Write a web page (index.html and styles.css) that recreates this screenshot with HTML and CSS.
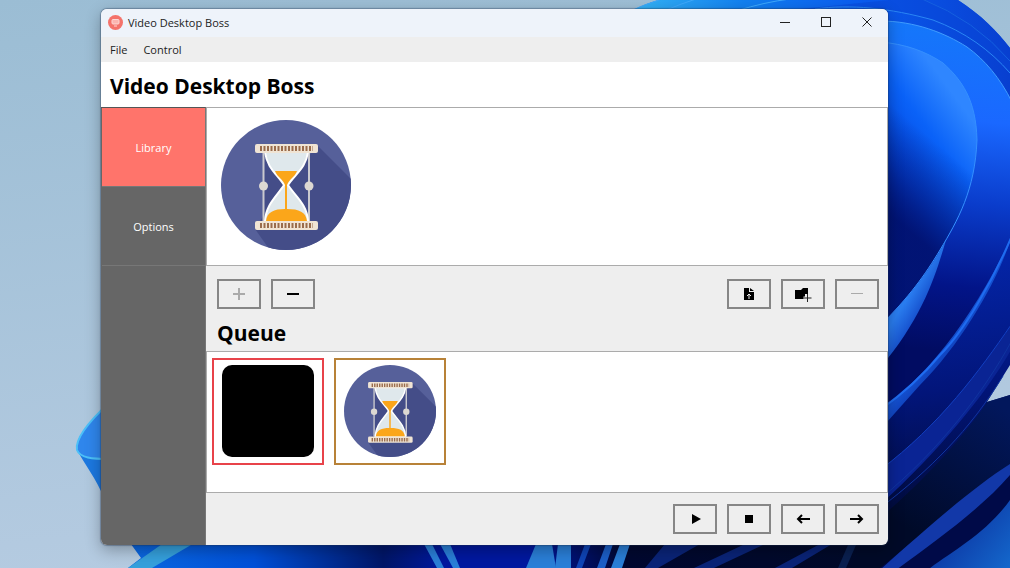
FILE: index.html
```html
<!DOCTYPE html>
<html lang="en">
<head>
    <meta charset="UTF-8">
    <meta name="viewport" content="width=device-width, initial-scale=1.0">
    <title>Video Desktop Boss</title>
    <link rel="stylesheet" href="styles.css">
</head>
<body>
    <!-- Desktop wallpaper -->
    <svg class="wallpaper" viewBox="0 0 1010 568" preserveAspectRatio="none" aria-hidden="true">
        <defs>
            <linearGradient id="sky" x1="0" y1="0" x2="0.2" y2="1">
                <stop offset="0" stop-color="#9bbdd4"/>
                <stop offset="1" stop-color="#b5cbe1"/>
            </linearGradient>
            <linearGradient id="bloom" gradientUnits="userSpaceOnUse" x1="900" y1="0" x2="960" y2="520">
                <stop offset="0" stop-color="#0a5cf0"/>
                <stop offset="0.25" stop-color="#0a4ae0"/>
                <stop offset="0.5" stop-color="#0425a8"/>
                <stop offset="0.75" stop-color="#02157a"/>
                <stop offset="1" stop-color="#010a35"/>
            </linearGradient>
            <linearGradient id="top" gradientUnits="userSpaceOnUse" x1="630" y1="0" x2="1010" y2="0">
                <stop offset="0" stop-color="#35b5f5"/>
                <stop offset="0.3" stop-color="#1280f0"/>
                <stop offset="0.6" stop-color="#0a5cf0"/>
                <stop offset="1" stop-color="#083fd0"/>
            </linearGradient>
            <linearGradient id="mid" gradientUnits="userSpaceOnUse" x1="960" y1="20" x2="930" y2="350">
                <stop offset="0" stop-color="#1478fa"/>
                <stop offset="0.3" stop-color="#1a68ff"/>
                <stop offset="0.55" stop-color="#0a3ccb"/>
                <stop offset="0.8" stop-color="#021488"/>
                <stop offset="1" stop-color="#010c62"/>
            </linearGradient>
            <linearGradient id="petal" gradientUnits="userSpaceOnUse" x1="965" y1="110" x2="870" y2="180">
                <stop offset="0" stop-color="#2f86ff"/>
                <stop offset="0.35" stop-color="#0a62f8"/>
                <stop offset="0.75" stop-color="#0448e0"/>
                <stop offset="1" stop-color="#0434c0"/>
            </linearGradient>
            <linearGradient id="petalShade" gradientUnits="userSpaceOnUse" x1="945" y1="150" x2="890" y2="215">
                <stop offset="0" stop-color="#01106c" stop-opacity="0"/>
                <stop offset="1" stop-color="#01106c" stop-opacity="0.9"/>
            </linearGradient>
            <linearGradient id="fold" gradientUnits="userSpaceOnUse" x1="900" y1="310" x2="925" y2="325">
                <stop offset="0" stop-color="#2a7df0"/>
                <stop offset="1" stop-color="#0a35b8"/>
            </linearGradient>
            <linearGradient id="band" gradientUnits="userSpaceOnUse" x1="930" y1="360" x2="960" y2="385">
                <stop offset="0" stop-color="#1450d0"/>
                <stop offset="1" stop-color="#031a88"/>
            </linearGradient>
            <linearGradient id="night" gradientUnits="userSpaceOnUse" x1="990" y1="400" x2="910" y2="530">
                <stop offset="0" stop-color="#02175c"/>
                <stop offset="1" stop-color="#000a28"/>
            </linearGradient>
            <linearGradient id="corner" gradientUnits="userSpaceOnUse" x1="940" y1="510" x2="1010" y2="568">
                <stop offset="0" stop-color="#0a2a9a"/>
                <stop offset="1" stop-color="#1468cc"/>
            </linearGradient>
            <linearGradient id="base" gradientUnits="userSpaceOnUse" x1="140" y1="0" x2="900" y2="0">
                <stop offset="0" stop-color="#0a66e0"/>
                <stop offset="0.15" stop-color="#0050d8"/>
                <stop offset="0.32" stop-color="#001668"/>
                <stop offset="0.4" stop-color="#0018a0"/>
                <stop offset="0.52" stop-color="#0018a0"/>
                <stop offset="0.64" stop-color="#000830"/>
                <stop offset="1" stop-color="#000a28"/>
            </linearGradient>
        </defs>
        <rect width="1010" height="568" fill="url(#sky)"/>

        <path d="M620 20 C640 6 650 2 660 0 H958 C980 14 998 32 1010 48 V365 L987 402 L1010 395 V568 H600 Z" fill="url(#bloom)"/>
        <path d="M625 14 C640 6 650 2 660 0 H958 C980 14 998 32 1010 48 V120 H880 L870 14 Z" fill="url(#top)"/>
        <path d="M815 9 C850 4 890 8 933 20 C965 32 990 50 1010 73 V61 Q975 20 922 -1 H900 L800 9 Z" fill="#0846d8" opacity="0.5"/>
        <g fill="none" stroke="#3fa8fa" stroke-width="1">
            <path d="M626 13 Q645 4 662 -1"/>
            <path d="M664 11 Q680 4 696 -1"/>
            <path d="M736 11 Q765 2 790 -1"/>
            <path d="M922 -1 Q975 20 1010 61" stroke="#1560e0"/>
            <path d="M815 9 C850 4 890 8 933 20 C965 32 990 50 1010 73" stroke="#2a86f5"/>
        </g>

        <path d="M880 21 C915 21 945 33 967 47 C985 60 1000 78 1012 102 V240 C993 280 965 330 940 355 Q915 385 880 410 Z" fill="url(#mid)"/>
        <path d="M880 21 C915 21 945 33 967 47 C985 60 1000 78 1012 102" fill="none" stroke="#3f9cff"/>
        <path d="M880 42 C905 44 925 51 943 63 C962 80 976 100 977 140 C975 190 958 220 940 250 C925 275 910 296 880 326 Z" fill="url(#petal)"/>
        <path d="M880 42 C905 44 925 51 943 63 C962 80 976 100 977 140 C975 190 958 220 940 250 C925 275 910 296 880 326 Z" fill="url(#petalShade)"/>
        <path d="M880 42 C905 44 925 51 943 63 C962 80 976 100 977 140 C975 190 958 220 940 250 C925 275 910 296 880 326" fill="none" stroke="#3590ff" stroke-width="1"/>
        <path d="M946 240 C937 270 925 315 880 368 V326 C910 296 930 270 946 240 Z" fill="url(#fold)"/>

        <!-- Lower folds -->
        <path d="M1011 238 C1000 275 965 340 920 385 Q902 405 880 430 V410 C915 385 965 335 1011 238 Z" fill="url(#band)"/>
        <path d="M1011 238 C993 280 965 330 940 355 Q915 385 880 410" fill="none" stroke="#1f6cf0" stroke-width="2"/>
        <path d="M1011 325 C980 370 940 425 880 470 V505 C940 450 985 395 1011 350 Z" fill="#0a2494"/>
        <path d="M1011 325 C980 370 940 425 880 470" fill="none" stroke="#123fc0"/>
        <path d="M1011 342 C985 390 940 450 880 499 M1003 376 C970 430 930 470 880 508" fill="none" stroke="#0f34a0"/>

        <!-- Left petal tip -->
        <path d="M110 402 C85 425 75 440 77 450 C85 465 96 478 104 498 H110 Z" fill="#1c78e0"/>
        <path d="M110 402 C85 425 75 440 77 450 C80 458 92 459 110 459 Z" fill="#2f86ec" stroke="#4cc0f8" stroke-width="2"/>

        <!-- Strip below the window -->
        <path d="M128 540 L141 558 L128 568 H900 V540 Z" fill="url(#base)"/>
        <path d="M165 542 L128 568 H152 L196 542 Z" fill="#35a0dc"/>
        <g fill="#2a7fd8">
            <path d="M424 544 L437 568 H444 L432 544 Z"/>
            <path d="M440 544 L453 568 H460 L450 544 Z"/>
            <path d="M536 544 L526 568 H556 L552 544 Z"/>
            <path d="M558 544 L555 568 H571 V544 Z"/>
            <path d="M585 544 L576 568 H582 L591 544 Z" fill="#0f45b8"/>
            <path d="M606 544 L597 568 H605 L613 544 Z" fill="#1c5fc8"/>
            <path d="M620 544 L611 568 H622 L630 544 Z"/>
        </g>
        <g fill="#0a2478">
            <path d="M665 544 L645 568 H658 L700 544 Z"/>
            <path d="M745 544 L694 568 H714 L765 544 Z"/>
            <path d="M820 544 L775 568 H792 L832 544 Z"/>
        </g>

        <!-- Bottom right corner -->
        <path d="M987 402 L1010 395 V568 H850 L880 518 C925 480 965 435 987 402 Z" fill="url(#night)"/>
        <path d="M848 545 L838 568 H846 L856 545 Z" fill="#0a2050"/>
        <path d="M1010 465 C970 490 930 530 872 574 H1010 Z" fill="#000a48"/>
        <path d="M1010 464 C975 486 930 525 880 570 H896 C930 545 980 510 1010 475 Z" fill="#1238a8"/>
        <path d="M1010 500 C985 535 950 552 925 572 H1010 Z" fill="url(#corner)"/>
    </svg>

    <!-- Shared artwork -->
    <svg class="sprite" aria-hidden="true">
        <symbol id="hourglass" viewBox="0 0 130 130">
            <clipPath id="disc"><circle cx="65" cy="65" r="65"/></clipPath>
            <g clip-path="url(#disc)">
                <rect width="130" height="130" fill="#56609a"/>
                <path d="M97 26 L140 69 V140 H56 L34 109 L65 60 Z" fill="#444d88"/>
                <path d="M42 30 H88 V102 H42 Z" fill="#444d88"/>
            </g>
            <path d="M42.500 32 V101 M88 32 V101" stroke="#c9c9cf" stroke-width="2"/>
            <path d="M44 32 C46 48 56 54 63 65 C56 76 45 84 44 101 H87 C86 84 74 76 67 65 C74 54 85 48 87 32 Z" fill="#dfe8ec" stroke="#fff" stroke-width="2"/>
            <path d="M54 51 H76 C74 57 68 59 66 65 V89 C78 89 85 92 86 101 H45 C46 92 53 89 64 89 V65 C62 59 56 57 54 51 Z" fill="#fba61a"/>
            <circle cx="42.500" cy="66" r="4.500" fill="#dcd8d2"/>
            <circle cx="88" cy="66" r="4.500" fill="#dcd8d2"/>
            <rect x="34" y="24" width="63" height="9" rx="2" fill="#f0e4d4"/>
            <rect x="34" y="101" width="63" height="9" rx="2" fill="#f0e4d4"/>
            <path d="M39 28.500 H92 M39 105.500 H92" stroke="#9a6c4c" stroke-width="5" stroke-dasharray="2 1.500"/>
        </symbol>
    </svg>

    <div class="window">
        <div class="title-bar">
            <svg class="app-icon" viewBox="0 0 15 15" aria-hidden="true">
                <circle cx="7.500" cy="7.500" r="7.500" fill="#f4736b"/>
                <rect x="4" y="4.500" width="7" height="4.500" rx="1" fill="#fbb5b0" stroke="#fdd8d5"/>
                <path d="M6 11 H9" stroke="#fdd8d5"/>
            </svg>
            <span class="app-name">Video Desktop Boss</span>
            <div class="window-controls">
                <button aria-label="Minimize"><svg viewBox="0 0 10 10"><path d="M0 5.500 H10"/></svg></button>
                <button aria-label="Maximize"><svg viewBox="0 0 10 10"><rect x="0.500" y="0.500" width="9" height="9"/></svg></button>
                <button aria-label="Close"><svg viewBox="0 0 10 10"><path d="M0.500 0.500 L9.500 9.500 M9.500 0.500 L0.500 9.500"/></svg></button>
            </div>
        </div>
        <div class="menu-bar">
            <button>File</button>
            <button>Control</button>
        </div>
        <header>
            <h1>Video Desktop Boss</h1>
        </header>
        <div class="content">
            <nav>
                <button class="tab active">Library</button>
                <button class="tab">Options</button>
            </nav>
            <main>
                <section class="panel library">
                    <svg class="library-item" role="img" aria-label="Hourglass"><use href="#hourglass"/></svg>
                </section>
                <div class="toolbar">
                    <button class="tool" aria-label="Add to queue" disabled><svg viewBox="0 0 16 16"><path class="line" d="M2 8 H14 M8 2 V14"/></svg></button>
                    <button class="tool" aria-label="Remove from queue"><svg viewBox="0 0 16 16"><path class="line" d="M2 8 H14"/></svg></button>
                    <span class="spacer"></span>
                    <button class="tool" aria-label="Add file">
                        <svg viewBox="0 0 16 16">
                            <path d="M3 2 H8 V6 H13 V14 H3 Z M9 2 L13 5 H9 Z"/>
                            <path d="M8 13 V8 M6 10 L8 8 L10 10" fill="none" stroke="#eee"/>
                        </svg>
                    </button>
                    <button class="tool" aria-label="Add folder">
                        <svg class="wide" viewBox="0 0 18 16">
                            <path d="M1 4 H7 L9 2 H14 V8 H11 V13 H1 Z"/>
                            <path d="M13.500 8 V16 M9.500 12 H17.500" fill="none" stroke="#eee" stroke-width="3"/>
                            <path d="M13.500 8 V16 M9.500 12 H17.500" fill="none" stroke="#222"/>
                        </svg>
                    </button>
                    <button class="tool" aria-label="Remove from library" disabled><svg viewBox="0 0 16 16"><path class="line thin" d="M2 7.500 H14"/></svg></button>
                </div>
                <h2>Queue</h2>
                <section class="panel queue">
                    <div class="queue-item current"><div class="blank"></div></div>
                    <div class="queue-item"><svg role="img" aria-label="Hourglass"><use href="#hourglass"/></svg></div>
                </section>
                <div class="player">
                    <button class="tool" aria-label="Play"><svg viewBox="0 0 16 16"><path d="M5 3 L14 8 L5 13 Z"/></svg></button>
                    <button class="tool" aria-label="Stop"><svg viewBox="0 0 16 16"><rect x="4" y="4" width="8" height="8"/></svg></button>
                    <button class="tool" aria-label="Previous"><svg viewBox="0 0 16 16"><path class="line" d="M3 8 H15 M7 4 L3 8 L7 12"/></svg></button>
                    <button class="tool" aria-label="Next"><svg viewBox="0 0 16 16"><path class="line" d="M1 8 H13 M9 4 L13 8 L9 12"/></svg></button>
                </div>
            </main>
        </div>
    </div>
</body>
</html>
```
FILE: styles.css
```css
* {
    box-sizing: border-box;
}
body {
    display: flex;
    min-height: 100vh;
    margin: 0;
    padding: 9px 122px 23px 101px;
    background-color: #a9c4da;
    font-family: "Open Sans", "Noto Sans", sans-serif;
    font-size: 11px;
    color: #222222;
}
button {
    padding: 0;
    border: none;
    background: none;
    font: inherit;
    color: inherit;
}
.wallpaper {
    position: absolute;
    top: 0;
    left: 0;
    width: 100%;
    height: 100%;
    z-index: -1;
}
.sprite {
    position: absolute;
    width: 0;
    height: 0;
}
.window {
    display: flex;
    flex: 1;
    flex-direction: column;
    overflow: hidden;
    border-radius: 6px;
    background-color: #eeeeee;
    box-shadow: 0 0 1px 1px rgba(30, 50, 80, 0.35), 0 5px 16px rgba(0, 0, 0, 0.3);
}
.title-bar {
    display: flex;
    align-items: center;
    gap: 5px;
    height: 28px;
    padding: 0 16px 2px 7px;
    background-color: #eef3fa;
}
.app-icon {
    width: 15px;
    height: 15px;
}
.window-controls {
    display: flex;
    gap: 31px;
    margin-left: auto;
}
.window-controls button {
    display: flex;
}
.window-controls svg {
    width: 10px;
    height: 10px;
    fill: none;
    stroke: #222222;
}
.menu-bar {
    display: flex;
    gap: 16px;
    height: 25px;
    padding: 0 9px;
}
header {
    height: 45px;
    padding: 0 9px;
    background-color: #ffffff;
}
h1, h2 {
    margin: 0;
    font-size: 21px;
    font-weight: bold;
    color: #000000;
}
h1 {
    line-height: 48px;
}
.content {
    display: flex;
    flex: 1;
}
nav {
    width: 105px;
    padding-left: 1px;
    border-top: 1px solid #555555;
    border-right: 1px solid #777777;
    background-color: #666666;
}
.tab {
    display: block;
    width: 100%;
    height: 79px;
    border-bottom: 1px solid #777777;
    color: #ffffff;
}
.tab.active {
    background-color: #ff746b;
}
main {
    display: flex;
    flex: 1;
    flex-direction: column;
}
.panel {
    border: 1px solid #ababab;
    background-color: #ffffff;
}
.library {
    height: 159px;
    padding: 12px 14px;
}
.library-item {
    display: block;
    width: 130px;
    height: 130px;
}
.toolbar, .player {
    display: flex;
    gap: 10px;
    padding: 13px 9px 0 11px;
}
.spacer {
    flex: 1;
}
.tool {
    display: flex;
    align-items: center;
    justify-content: center;
    width: 44px;
    height: 30px;
    border: 2px solid #868686;
    color: #000000;
}
.tool svg {
    width: 16px;
    height: 16px;
    fill: currentColor;
}
.tool svg.wide {
    width: 18px;
}
.tool .line {
    fill: none;
    stroke: currentColor;
    stroke-width: 2;
}
.tool .thin {
    stroke-width: 1;
}
.tool:disabled {
    color: #aaaaaa;
}
h2 {
    height: 42px;
    padding: 0 11px;
    line-height: 48px;
}
.queue {
    display: flex;
    flex: 1;
    align-items: flex-start;
    gap: 10px;
    padding: 6px 5px;
}
.queue-item {
    width: 112px;
    height: 107px;
    padding: 5px 8px;
    border: 2px solid #b88238;
}
.queue-item.current {
    border-color: #e8434a;
}
.queue-item svg, .blank {
    display: block;
    width: 92px;
    height: 92px;
}
.blank {
    border-radius: 10px;
    background-color: #000000;
}
.player {
    justify-content: flex-end;
    height: 52px;
    padding-top: 11px;
}
```
